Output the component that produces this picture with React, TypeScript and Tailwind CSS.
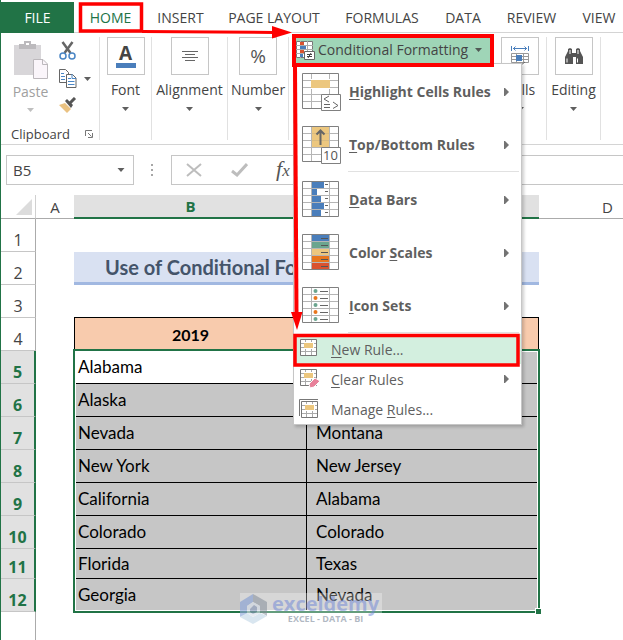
import type { ReactNode } from "react";
import { clsx } from "clsx";

const TABS = [
  { name: "INSERT", width: "w-[67px]" },
  { name: "PAGE LAYOUT", width: "w-[120px]" },
  { name: "FORMULAS", width: "w-[96px]" },
  { name: "DATA", width: "w-[66px]" },
  { name: "REVIEW", width: "w-[71px]" },
  { name: "VIEW", width: "w-[64px]" },
];

const ROWS = [
  ["Alabama", ""],
  ["Alaska", ""],
  ["Nevada", "Montana"],
  ["New York", "New Jersey"],
  ["California", "Alabama"],
  ["Colorado", "Colorado"],
  ["Florida", "Texas"],
  ["Georgia", "Nevada"],
];

export default function App() {
  return (
    <div className="relative min-h-screen overflow-hidden border-l border-[#217346] bg-white font-['Open_Sans','Noto_Sans',sans-serif] text-[#444]">
      <TabBar />
      <Ribbon />
      <FormulaBar />
      <Sheet />
      <Watermark />
      <Annotations />
    </div>
  );
}

function TabBar() {
  return (
    <nav className="flex h-[33px] border-b border-[#d4d4d4] pt-[2px] text-[14px] whitespace-nowrap">
      <button className="-mb-px w-[73px] shrink-0 bg-[#217346] text-white">FILE</button>
      <button className="w-[73px] shrink-0 text-[#217346]">HOME</button>
      {TABS.map((t) => (
        <button key={t.name} className={clsx("shrink-0", t.width)}>
          {t.name}
        </button>
      ))}
    </nav>
  );
}

function Ribbon() {
  return (
    <div className="flex h-[112px] border-b border-[#d4d4d4] pt-1 pb-1">
      <section className="flex w-[99px] shrink-0 flex-col border-r border-[#e1e1e1]">
        <div className="flex flex-1">
          <button className="flex w-[57px] flex-col items-center pt-1 pl-[2px] text-[14px] leading-5 text-[#a0a0a0]">
            <PasteIcon />
            <span className="mt-[3px]">Paste</span>
            <Caret className="mt-[6px] text-[#b5b5b5]" />
          </button>
          <div className="flex flex-col gap-[9px] pt-1 pl-px">
            <button aria-label="Cut"><CutIcon /></button>
            <button aria-label="Copy" className="flex items-center gap-[7px]">
              <CopyIcon />
              <Caret />
            </button>
            <button aria-label="Format Painter"><BrushIcon /></button>
          </div>
        </div>
        <div className="flex items-center justify-between pr-[6px] pl-[10px] text-[13px] leading-3">
          Clipboard
          <svg width="8" height="8" viewBox="0 0 8 8" fill="none" stroke="#777">
            <path d="M.5 6V.5H7M3 3l3.500 3.500M7.500 3v4.500H3" />
          </svg>
        </div>
      </section>
      <Group label="Font" width="w-[52px]">
        <span className="flex flex-col items-center">
          <span className="text-[19px] leading-[19px] font-bold text-[#444]">A</span>
          <span className="h-[5px] w-5 bg-[#4a7ebb]" />
        </span>
      </Group>
      <Group label="Alignment" width="w-[76px]">
        <svg width="16" height="12" viewBox="0 0 16 12" stroke="#666">
          <path d="M0 1.500h16M3 4.500h10M0 7.500h16M3 10.500h10" />
        </svg>
      </Group>
      <Group label="Number" width="w-[61px]">
        <span className="text-[19px] text-[#555]">%</span>
      </Group>
      <section className="relative w-[205px] shrink-0">
        <button className="ml-[5px] flex h-[26px] w-[198px] items-center gap-[3px] bg-[#9fd5b7] pl-[2px] text-[14px] leading-4 whitespace-nowrap">
          <ConditionalIcon />
          Conditional Formatting
          <Caret className="ml-1" />
        </button>
        <RulesMenu />
      </section>
      <Group label="Cells" width="w-[53px]">
        <CellsIcon />
      </Group>
      <Group label="Editing" width="w-[54px]">
        <BinocularsIcon />
      </Group>
    </div>
  );
}

function Group({ label, width, children }: { label: string; width: string; children: ReactNode }) {
  return (
    <section className={clsx("shrink-0 border-r border-[#e1e1e1]", width)}>
      <button className="flex w-full flex-col items-center">
        <span className="flex h-[38px] w-[38px] items-center justify-center border border-[#c6c6c6]">{children}</span>
        <span className="mt-1 text-[14px] leading-[22px]">{label}</span>
        <Caret className="mt-[6px]" />
      </button>
    </section>
  );
}

function RulesMenu() {
  return (
    <ul
      role="menu"
      className="absolute top-[26px] left-1 z-10 w-[229px] border border-[#c6c6c6] bg-white pt-px text-[#5f5f5f] shadow-[2px_2px_3px_rgba(0,0,0,0.2)]"
    >
      <BigItem icon={<HighlightIcon />}><u>H</u>ighlight Cells Rules</BigItem>
      <BigItem icon={<TopBottomIcon />}><u>T</u>op/Bottom Rules</BigItem>
      <li role="separator" className="mr-[2px] mb-px ml-[54px] h-px bg-[#e1e1e1]" />
      <BigItem icon={<DataBarsIcon />}><u>D</u>ata Bars</BigItem>
      <BigItem icon={<ColorScalesIcon />}>Color <u>S</u>cales</BigItem>
      <BigItem icon={<IconSetsIcon />}><u>I</u>con Sets</BigItem>
      <li role="separator" className="mr-[2px] mb-px ml-[54px] h-px bg-[#e1e1e1]" />
      <SmallItem icon={<RuleIcon kind="new" />} active><u>N</u>ew Rule...</SmallItem>
      <SmallItem icon={<RuleIcon kind="clear" />} arrow><u>C</u>lear Rules</SmallItem>
      <SmallItem icon={<RuleIcon kind="manage" />}>Manage <u>R</u>ules...</SmallItem>
    </ul>
  );
}

function BigItem({ icon, children }: { icon: ReactNode; children: ReactNode }) {
  return (
    <li role="none">
      <button role="menuitem" className="flex h-[53px] w-full items-center pr-3 pl-2 text-left text-[14px] font-bold">
        {icon}
        <span className="ml-2 flex-1 underline-offset-2">{children}</span>
        <SubArrow />
      </button>
    </li>
  );
}

function SmallItem({ icon, active, arrow, children }: { icon: ReactNode; active?: boolean; arrow?: boolean; children: ReactNode }) {
  return (
    <li role="none">
      <button
        role="menuitem"
        className={clsx("flex h-[30px] w-full items-center pr-3 pl-[5px] text-left text-[14px]", active && "bg-[#d3efdf]")}
      >
        {icon}
        <span className="ml-[10px] flex-1 underline-offset-2">{children}</span>
        {arrow && <SubArrow />}
      </button>
    </li>
  );
}

function FormulaBar() {
  return (
    <div className="flex h-[50px] items-start pt-[10px] pl-[5px]">
      <label className="flex h-[30px] w-[128px] shrink-0 items-center border border-[#c6c6c6] pr-2 pl-[6px]">
        <input aria-label="Name Box" defaultValue="B5" className="w-full min-w-0 text-[15px] outline-none" />
        <Caret wide />
      </label>
      <svg className="mx-4 mt-[9px] shrink-0" width="5" height="12" fill="#a6a6a6">
        <path d="M1 0h2v2H1zM1 5h2v2H1zM1 10h2v2H1z" />
      </svg>
      <div className="flex h-[30px] flex-1 items-center border border-r-0 border-[#c6c6c6] pl-[14px]">
        <button aria-label="Cancel">
          <svg width="16" height="14" fill="none" stroke="#bdbdbd" strokeWidth="2">
            <path d="M1 1l14 12M15 1L1 13" />
          </svg>
        </button>
        <button aria-label="Enter" className="ml-[29px]">
          <svg width="17" height="14" fill="none" stroke="#bdbdbd" strokeWidth="3">
            <path d="M1 8l5 4L16 1" />
          </svg>
        </button>
        <button aria-label="Insert Function" className="ml-7 font-['Liberation_Serif',serif] text-[22px] leading-5 text-[#555] italic">
          f<span className="text-[17px]">x</span>
        </button>
        <input aria-label="Formula Bar" className="ml-3 min-w-0 flex-1 outline-none" />
      </div>
    </div>
  );
}

function Sheet() {
  return (
    <div className="relative">
      <table className="w-full table-fixed border-separate border-spacing-0">
        <colgroup>
          <col className="w-[35px]" />
          <col className="w-[38px]" />
          <col className="w-[233px]" />
          <col className="w-[232px]" />
          <col />
        </colgroup>
        <thead>
          <tr className="h-6 text-[15px] leading-5">
            <th aria-label="Select all" className="border-r border-b border-[#ababab] border-r-[#d0d0d0] p-0">
              <svg className="ml-auto mr-[3px]" width="16" height="16" fill="#dcdcdc">
                <path d="M16 0v16H0z" />
              </svg>
            </th>
            <th className="border-b border-[#ababab] p-0 font-normal">A</th>
            <th className="border-b-2 border-[#217346] bg-[#e1e1e1] p-0 text-[#217346]">B</th>
            <th className="border-b-2 border-[#217346] bg-[#e1e1e1] p-0 text-[#217346]">C</th>
            <th className="border-b border-[#ababab] p-0 pl-[63px] text-left font-normal">D</th>
          </tr>
        </thead>
        <tbody className="font-['Lato','Open_Sans',sans-serif] text-[17px] leading-5 text-black">
          <tr className="h-[33px]">
            <RowHead n={1} />
            <td />
            <td />
            <td />
            <td />
          </tr>
          <tr className="h-[33px]">
            <RowHead n={2} />
            <td />
            <td colSpan={2} className="border-b-[3px] border-[#a1b8e1] bg-[#d9e1f2] p-0 pl-[31px] text-[20px] font-bold text-[#44546a]">
              Use of Conditional Formatting
            </td>
            <td />
          </tr>
          <tr className="h-[33px]">
            <RowHead n={3} />
            <td />
            <td className="border-b border-black" />
            <td className="border-b border-black" />
            <td />
          </tr>
          <tr className="h-[33px]">
            <RowHead n={4} />
            <td />
            <th className="border-r border-l border-black bg-[#f8cbad] p-0 text-[16px]">2019</th>
            <th className="border-r border-black bg-[#f8cbad] p-0 text-[16px]">2020</th>
            <td />
          </tr>
          {ROWS.map(([left, right], i) => (
            <tr key={i} className={i === 6 ? "h-[30px]" : "h-[33px]"}>
              <RowHead n={i + 5} selected />
              <td />
              <td className={clsx("border-r border-b border-black p-0 pl-1", i > 0 && "bg-[#c6c6c6]")}>{left}</td>
              <td className="border-b border-black bg-[#c6c6c6] p-0 pl-[9px]">{right}</td>
              <td />
            </tr>
          ))}
          <tr className="h-[33px]">
            <th className="border-r border-[#ababab]" />
            <td colSpan={4} />
          </tr>
        </tbody>
      </table>
      {/* selection frame around B5:C12 */}
      <div className="pointer-events-none absolute top-[154px] left-[72px] h-[264px] w-[467px] border-2 border-[#217346]">
        <div className="h-full border border-white" />
        <span className="absolute -right-[4px] -bottom-[4px] h-[7px] w-[7px] border border-white bg-[#217346]" />
      </div>
    </div>
  );
}

function RowHead({ n, selected }: { n: number; selected?: boolean }) {
  return (
    <th
      scope="row"
      className={clsx(
        "border-b border-b-[#c6c6c6] p-0 align-bottom font-['Open_Sans','Noto_Sans',sans-serif] text-[16px] leading-[22px]",
        selected ? "border-r-2 border-r-[#217346] bg-[#e1e1e1] font-bold text-[#217346]" : "border-r border-r-[#ababab] font-normal text-[#444]",
      )}
    >
      {n}
    </th>
  );
}

function Watermark() {
  return (
    <div className="pointer-events-none absolute top-[593px] left-[239px] flex h-[31px] w-[142px] items-center gap-[5px] bg-white/30">
      <svg className="shrink-0" width="27" height="30" viewBox="0 0 27 30" opacity="0.5">
        <path d="M0 8L13 0v8L7 12v8L0 23z" fill="#6f8fd0" />
        <path d="M13 0l14 8v14l-7-4v-6l-7-4z" fill="#7d8794" />
        <path d="M0 23l7-4 6 4 7-4 7 3-14 8z" fill="#b4cfe2" />
        <path d="M13 8l7 4v7l-7 4-6-4v-7z" fill="#cfd8e6" />
        <path d="M10 15l4-4 3 2v5l-4 2-3-2z" fill="#6a7ea8" />
      </svg>
      <div className="flex flex-col items-center font-bold">
        <span className="text-[20px] leading-5 text-[#6b83d6]/50">exceldemy</span>
        <span className="text-[9px] leading-[9px] whitespace-nowrap text-[#8e99a8]/70">EXCEL - DATA - BI</span>
      </div>
    </div>
  );
}

// Red boxes and arrows that walk through HOME > Conditional Formatting > New Rule
function Annotations() {
  return (
    <svg className="pointer-events-none absolute top-0 -left-px z-20" width="623" height="640" fill="none" stroke="#fe0000" strokeWidth="4">
      <rect x="80.500" y="4" width="61" height="27" strokeWidth="3.500" />
      <path d="M142 31.500L274 32.500" strokeWidth="3" />
      <path d="M272 26l20 6.500-20 6z" fill="#fe0000" stroke="none" />
      <rect x="294" y="36" width="198" height="29" />
      <path d="M295 66l1.500 248" />
      <path d="M291 312h11.500L297 330z" fill="#fe0000" stroke="none" />
      <rect x="295" y="335.500" width="223" height="29.500" strokeWidth="3.500" />
    </svg>
  );
}

function Caret({ className, wide }: { className?: string; wide?: boolean }) {
  return (
    <svg className={clsx("shrink-0", className)} width={wide ? 8 : 7} height={4} viewBox="0 0 7 4" fill="currentColor" opacity="0.85">
      <path d="M0 0h7L3.500 4z" />
    </svg>
  );
}

function SubArrow() {
  return (
    <svg width="5" height="8" fill="#737373">
      <path d="M0 0h1l4 4-4 4H0z" />
    </svg>
  );
}

function PasteIcon() {
  return (
    <svg width="34" height="38" viewBox="0 0 34 38">
      <path d="M0 4h5v4h16V4h6v30H0z" fill="#d8d6d9" />
      <path d="M5 3h5V0h7v3h5v5H5z" fill="#bcbabd" />
      <path d="M12 2h3v2h-3z" fill="#fff" />
      <path d="M19.500 18.500H29l4.500 4.500v14.500h-14z" fill="#faf5fa" stroke="#bcb8bc" />
      <path d="M28.500 18.500v5h5" fill="none" stroke="#bcb8bc" />
    </svg>
  );
}

function CutIcon() {
  return (
    <svg width="18" height="19" viewBox="0 0 18 19" fill="none">
      <path d="M3.500 1l8 11M13.500 1l-8 11" stroke="#666" strokeWidth="2.500" />
      <circle cx="4" cy="15" r="3" stroke="#4a86c5" strokeWidth="1.500" />
      <circle cx="13" cy="15" r="3" stroke="#4a86c5" strokeWidth="1.500" />
    </svg>
  );
}

function CopyIcon() {
  return (
    <svg width="18" height="19" viewBox="0 0 18 19">
      <path d="M.5.500h6l3 3v10h-9z" fill="#fff" stroke="#666" />
      <path d="M2 4.500h3M2 7.500h4M2 10.500h4" stroke="#4a86c5" />
      <path d="M7.500 5.500h6l3.500 3.500v9.500H7.500z" fill="#fff" stroke="#666" />
      <path d="M9 9.500h3M9 12.500h6.500M9 15.500h6.500M13 5v4.500h4" stroke="#4a86c5" fill="none" />
    </svg>
  );
}

function BrushIcon() {
  return (
    <svg width="18" height="16" viewBox="0 0 18 16">
      <path d="M0 8l6-2 6 6-4 4z" fill="#eac282" />
      <path d="M6 4l2-2 6 6-2 3z" fill="#555" />
      <path d="M11 6l5-5" stroke="#555" strokeWidth="3" />
    </svg>
  );
}

function ConditionalIcon() {
  return (
    <svg className="shrink-0" width="19" height="19" viewBox="0 0 19 19">
      <path d="M.5.500h16v16H.5z" fill="#fff" stroke="#777" />
      <path d="M0 4.500h17M0 8.500h17M0 12.500h17M4.500 0v17M11.500 0v17" stroke="#aaa" />
      <path d="M4 1h4v3H4zM4 9h4v3H4z" fill="#d9532f" />
      <path d="M4 5h6v3H4zM4 13h3v3H4z" fill="#4a7ebb" />
      <path d="M8.500 10.500h10v8h-10z" fill="#fff" stroke="#666" />
      <path d="M11 13.500h5M11 15.500h5M15 12l-3 5" stroke="#444" />
    </svg>
  );
}

function CellsIcon() {
  return (
    <svg width="18" height="20" viewBox="0 0 18 20" fill="none">
      <path d="M.5 0v5M17.500 0v5M2 2.500h14M4.500.500l-2 2 2 2M13.500.500l2 2-2 2" stroke="#4a7ebb" />
      <path d="M.5 7.500h17v9H.5zM.5 10.500h17M.5 13.500h17M5.500 7v10M12.500 7v10" stroke="#999" />
      <path d="M5 9h6v6H5z" fill="#4a7ebb" />
      <path d="M10 19l4-3" stroke="#666" />
    </svg>
  );
}

function BinocularsIcon() {
  return (
    <svg width="18" height="16" viewBox="0 0 18 16" fill="#555">
      <path d="M3 3V1l2-1 2 1v4h4V1l2-1 2 1v2l3 6v7h-7V9H8v7H0V9z" />
      <path d="M2 10.500v4M12.500 10.500v4M5 2v4M13 2v4" stroke="#fff" />
    </svg>
  );
}

// Shared frame of the large menu icons: 3 x 5 cells
function GridIcon({ children }: { children: ReactNode }) {
  return (
    <svg className="-mr-px shrink-0" width="40" height="39" viewBox="0 0 40 39">
      <path d="M.5 1.500h36v35H.5z" fill="#fff" stroke="#808080" />
      <path d="M1 8.500h35M1 15.500h35M1 22.500h35M1 29.500h35M9.500 2v34M27.500 2v34" stroke="#b5b5b5" />
      {children}
    </svg>
  );
}

function HighlightIcon() {
  return (
    <GridIcon>
      <path d="M9 7h19v10H9z" fill="#fff" />
      <path d="M9 8h19v8H9z" fill="#ecc77f" />
      <path d="M19.500 22.500h19v16h-19z" fill="#fff" stroke="#808080" />
      <path d="M27 24l-5 3 5 3M22 32.500h6M22 35.500h6M31 30l5 3.500-5 3" fill="none" stroke="#666" />
    </GridIcon>
  );
}

function TopBottomIcon() {
  return (
    <GridIcon>
      <path d="M10 2h17v20H10z" fill="#ecc77f" />
      <path d="M10 8.500h17M10 15.500h17" stroke="#d9bb7f" />
      <path d="M18.500 20V6M14.500 9.500l4-4 4 4" fill="none" stroke="#666" strokeWidth="2" />
      <path d="M19.500 22.500h19v16h-19z" fill="#fff" stroke="#808080" />
      <text x="21" y="35" fontSize="13" fontWeight="400" fill="#555">10</text>
    </GridIcon>
  );
}

function DataBarsIcon() {
  return (
    <GridIcon>
      {[12, 5, 9, 12, 9].map((w, i) => (
        <rect key={i} x="10" y={2 + i * 7} width={w} height="6" fill="#4a7ebb" />
      ))}
      <path d="M23 4.500h3M23 11.500h3M23 18.500h3M23 25.500h3M23 32.500h3" stroke="#666" />
    </GridIcon>
  );
}

function ColorScalesIcon() {
  return (
    <GridIcon>
      {["#4a7ebb", "#6ba58f", "#ecc77f", "#e8761d", "#d9532f"].map((c, i) => (
        <rect key={c} x="10" y={2 + i * 7} width="17" height="6" fill={c} />
      ))}
      <path d="M19 5.500h7M19 12.500h7M19 19.500h7M19 26.500h7M19 33.500h7" stroke="#555" />
    </GridIcon>
  );
}

function IconSetsIcon() {
  return (
    <GridIcon>
      {["#6ba58f", "#e8761d", "#6ba58f", "#e8761d", "#6ba58f"].map((c, i) => (
        <circle key={i} cx="13.500" cy={5 + i * 7} r="2" fill={c} />
      ))}
      <path d="M18 5.500h8M18 12.500h8M18 19.500h8M18 26.500h8M18 33.500h8" stroke="#666" />
    </GridIcon>
  );
}

function RuleIcon({ kind }: { kind: "new" | "clear" | "manage" }) {
  return (
    <svg className="shrink-0" width="22" height="20" viewBox="0 0 22 20" fill="none">
      {kind === "manage" && <path d="M.5 17V.500H19" stroke="#777" />}
      <g transform={kind === "manage" ? "translate(2 2)" : "translate(1 0)"}>
        <path d="M.5.500h16v16H.5z" fill="#fff" stroke="#777" />
        <path d="M1 4.500h3M1 8.500h3M1 12.500h15M5.500 10v6M11.500 10v6M5.500 1v2M11.500 1v2M14 4.500h2M14 8.500h2" stroke="#aaa" />
        <path d="M4 4h9v5H4z" fill="#ecc77f" />
        {kind === "clear" && <path d="M9 15l6-6 5 3-6 6-4 1z" fill="#e8819a" stroke="#fff" />}
      </g>
    </svg>
  );
}
